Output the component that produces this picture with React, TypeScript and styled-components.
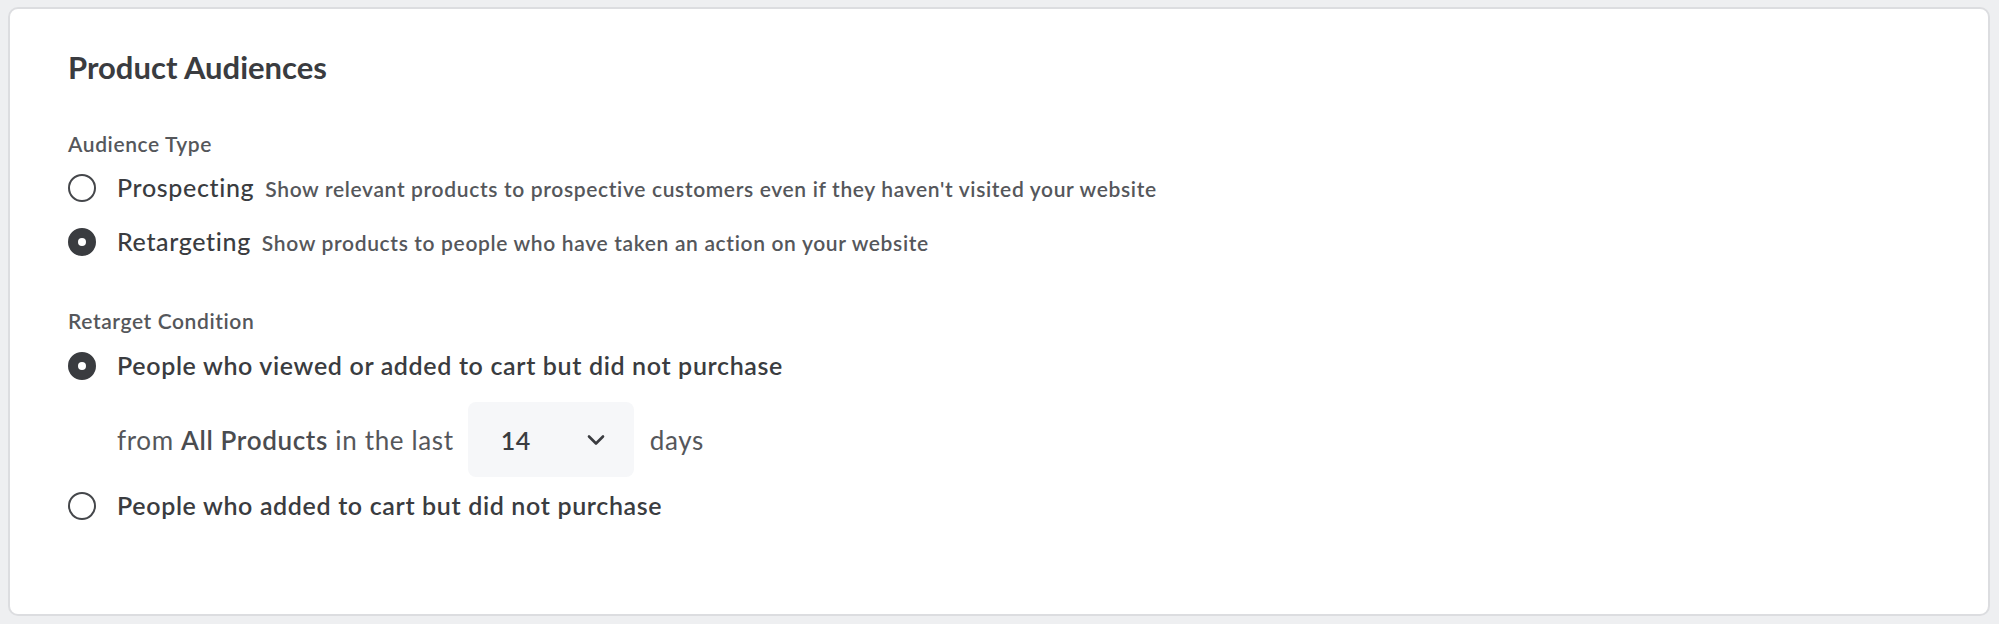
import React from "react";
import styled, { createGlobalStyle } from "styled-components";

const GlobalStyle = createGlobalStyle`
  html, body {
    margin: 0;
    padding: 0;
    background: #eeeff1;
  }
  body {
    font-family: Lato, "Open Sans", "Liberation Sans", sans-serif;
    color: #3a3c40;
  }
`;

const Page = styled.div`
  padding: 7px 9px 8px 8px;
`;

const Card = styled.section`
  box-sizing: border-box;
  height: 609px;
  background: #ffffff;
  border: 2px solid #dcdde0;
  border-radius: 10px;
  padding: 40px 58px 0 58px;
  display: flex;
  flex-direction: column;
`;

const Title = styled.h2`
  margin: 0;
  font-size: 31px;
  line-height: 37px;
  font-weight: 700;
  color: #3a3c40;
`;

const SectionLabel = styled.div<{ $top: number }>`
  margin-top: ${(p) => p.$top}px;
  font-size: 21px;
  line-height: 24px;
  font-weight: 600;
  letter-spacing: 0.6px;
  color: #55575b;
`;

const OptionRow = styled.label<{ $top: number }>`
  margin-top: ${(p) => p.$top}px;
  height: 44px;
  display: flex;
  align-items: center;
  gap: 21px;
  cursor: pointer;
`;

const Radio = styled.span<{ $checked: boolean }>`
  box-sizing: border-box;
  flex: none;
  width: 28px;
  height: 28px;
  border-radius: 50%;
  border: 2px solid ${(p) => (p.$checked ? "#3a3c40" : "#45474b")};
  background: ${(p) => (p.$checked ? "#3a3c40" : "#ffffff")};
  display: flex;
  align-items: center;
  justify-content: center;
  &::after {
    content: "";
    display: ${(p) => (p.$checked ? "block" : "none")};
    width: 8px;
    height: 8px;
    border-radius: 50%;
    background: #ffffff;
  }
`;

const OptionText = styled.span`
  display: flex;
  align-items: baseline;
  gap: 11px;
  position: relative;
  top: -1px;
`;

const OptionTitle = styled.span<{ $weight: number }>`
  font-size: 25px;
  line-height: 30px;
  font-weight: ${(p) => p.$weight};
  letter-spacing: 0.65px;
  color: #3a3c40;
`;

const OptionDesc = styled.span`
  font-size: 21px;
  line-height: 25px;
  font-weight: 600;
  letter-spacing: 0.65px;
  color: #55575b;
`;

const FromLine = styled.div`
  margin-top: 14px;
  margin-left: 49px;
  height: 75px;
  display: flex;
  align-items: center;
  font-size: 26px;
  font-weight: 400;
  letter-spacing: 0.65px;
  color: #55575b;
`;

const Strong = styled.span`
  font-weight: 600;
  color: #4a4c50;
`;

const Select = styled.div`
  box-sizing: border-box;
  margin: 0 16px 0 14px;
  width: 166px;
  height: 75px;
  background: #f6f7f9;
  border-radius: 8px;
  display: flex;
  align-items: center;
  justify-content: space-between;
  padding: 0 29px 0 33px;
  font-size: 25px;
  font-weight: 600;
  letter-spacing: 0.5px;
  color: #3a3c40;
`;

const Chevron = () => (
  <svg width="18" height="12" viewBox="0 0 18 12" fill="none">
    <path
      d="M2 2.5 L9 9.5 L16 2.5"
      stroke="#3a3c40"
      strokeWidth="2.6"
      strokeLinecap="round"
      strokeLinejoin="round"
    />
  </svg>
);

export default function App() {
  return (
    <>
      <GlobalStyle />
      <Page>
        <Card>
          <Title>Product Audiences</Title>

          <SectionLabel $top={46}>Audience Type</SectionLabel>
          <OptionRow $top={10}>
            <Radio $checked={false} />
            <OptionText>
              <OptionTitle $weight={500}>Prospecting</OptionTitle>
              <OptionDesc>
                Show relevant products to prospective customers even if they haven't visited your website
              </OptionDesc>
            </OptionText>
          </OptionRow>
          <OptionRow $top={10}>
            <Radio $checked={true} />
            <OptionText>
              <OptionTitle $weight={500}>Retargeting</OptionTitle>
              <OptionDesc>Show products to people who have taken an action on your website</OptionDesc>
            </OptionText>
          </OptionRow>

          <SectionLabel $top={45}>Retarget Condition</SectionLabel>
          <OptionRow $top={11}>
            <Radio $checked={true} />
            <OptionText>
              <OptionTitle $weight={600}>People who viewed or added to cart but did not purchase</OptionTitle>
            </OptionText>
          </OptionRow>
          <FromLine>
            from&nbsp;<Strong>All Products</Strong>&nbsp;in the last
            <Select>
              <span>14</span>
              <Chevron />
            </Select>
            days
          </FromLine>
          <OptionRow $top={7}>
            <Radio $checked={false} />
            <OptionText>
              <OptionTitle $weight={600}>People who added to cart but did not purchase</OptionTitle>
            </OptionText>
          </OptionRow>
        </Card>
      </Page>
    </>
  );
}
